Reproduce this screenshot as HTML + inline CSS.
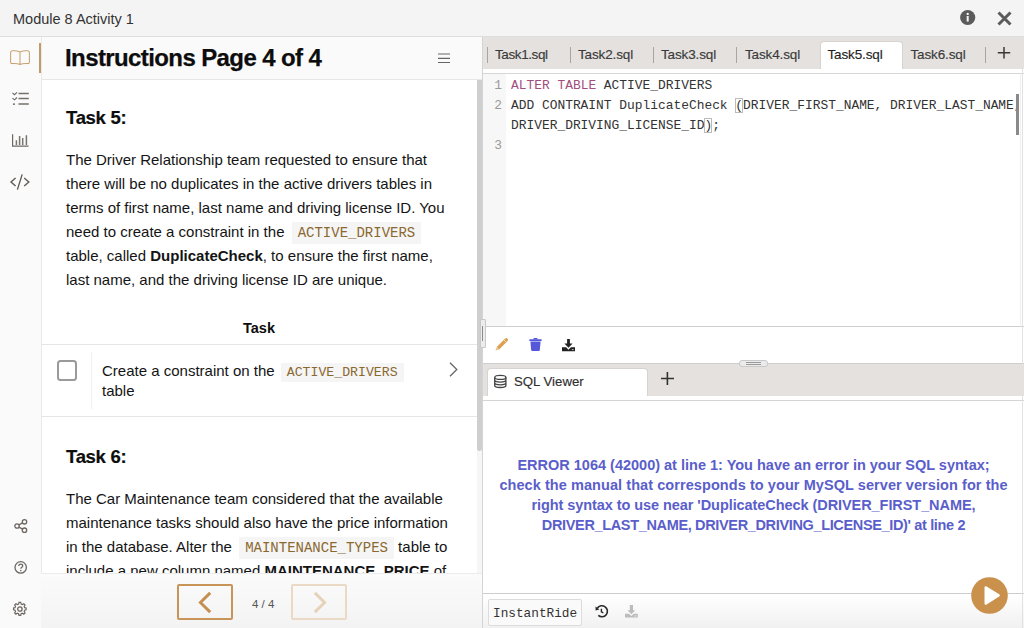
<!DOCTYPE html>
<html><head><meta charset="utf-8">
<style>
*{box-sizing:border-box;margin:0;padding:0}
html,body{width:1024px;height:628px;overflow:hidden;background:#fff;font-family:"Liberation Sans",sans-serif;color:#111}
.a{position:absolute}
.nw{white-space:nowrap}
svg{position:absolute;overflow:visible}
#title{left:0;top:0;width:1024px;height:37px;background:#f4f4f4;border-bottom:1px solid #dedede}
#side{left:0;top:37px;width:42px;height:591px;background:#fafafa;border-right:1px solid #e9e9e9}
#ind{left:39px;top:43px;width:2px;height:30px;background:#c39a6b}
#hdr{left:42px;top:37px;width:441px;height:43px;background:#fafafa;border-bottom:1px solid #e6e6e6}
#lscroll{left:477px;top:80px;width:5px;height:370.5px;background:#cfcfcf;border-radius:0 0 2.5px 2.5px}
#ltrack{left:477px;top:450px;width:5px;height:123px;background:#f6f6f6}
#nav{left:41px;top:573px;width:441px;height:55px;background:linear-gradient(#fbfbfb,#f3f3f3);border-top:1px solid #ececec}
#right{left:482px;top:37px;width:542px;height:591px;background:#fff;border-left:1px solid #d4d4d4}
#tabs{left:483px;top:37px;width:541px;height:32px;background:#e4e1de}
.tab{position:absolute;top:7.6px;height:20px;line-height:20px;font-size:13.5px;letter-spacing:-0.55px;color:#3a3a3a;white-space:nowrap;-webkit-text-stroke:0.15px #3a3a3a}
.sep{position:absolute;top:10px;width:1px;height:16px;background:#a8a5a2}
.p{position:absolute;left:66px;font-size:15px;line-height:24px;color:#141414;white-space:nowrap}
.code{font-family:"Liberation Mono",monospace;color:#8a682f;background:#f5f5f5;font-size:14px;padding:3px 6px;margin-left:3px;line-height:0}
.mono{font-family:"Liberation Mono",monospace}
.kw{color:#a24d7c}
.icon{stroke:#6e6762;fill:none;stroke-width:1.3}
</style></head><body>
<div id="title" class="a"><div class="a nw" style="left:13px;top:9px;font-size:14.5px;line-height:20px;color:#333">Module 8 Activity 1</div>
 <svg style="left:960px;top:10px" width="16" height="16" viewBox="0 0 16 16"><circle cx="7.7" cy="7.5" r="7.6" fill="#5b5b5b"/><circle cx="7.7" cy="3.9" r="1.2" fill="#f4f4f4"/><rect x="6.7" y="6" width="2" height="5.6" fill="#f4f4f4"/></svg>
 <svg style="left:997px;top:11px" width="15" height="15" viewBox="0 0 15 15"><path d="M1.5 1.5L13.5 13.5M13.5 1.5L1.5 13.5" stroke="#5b5b5b" stroke-width="3"/></svg>
</div>

<div id="side" class="a"></div>
<div id="ind" class="a"></div>
<!-- sidebar icons -->
<svg style="left:10px;top:49.5px" width="20" height="15" viewBox="0 0 20 15"><path d="M10 2C8 1 5 0.6 2.3 0.8Q0.6 1 0.6 2.6V12.2Q0.6 13.6 2.2 13.6C5 13.4 8 13.6 10 14.5C12 13.6 15 13.4 17.8 13.6Q19.4 13.6 19.4 12.2V2.6Q19.4 1 17.7 0.8C15 0.6 12 1 10 2ZM10 2V14.5" fill="none" stroke="#c9a273" stroke-width="1.05" stroke-linejoin="round"/></svg>
<svg style="left:12px;top:92px" width="18" height="14" viewBox="0 0 18 14"><path d="M0.4 0.9L2.5 2.7L5 0.3M0.4 6.1L2.5 7.9L5 5.5" fill="none" stroke="#6e6762" stroke-width="1.05"/><rect x="1.1" y="11.3" width="1.7" height="1.7" fill="#6e6762"/><path d="M6.5 1.4H16.8M6.5 6.6H16.8M6.5 12.1H16.8" fill="none" stroke="#76706b" stroke-width="1.5"/></svg>
<svg style="left:12px;top:134px" width="17" height="13" viewBox="0 0 17 13"><path d="M0.6 0.3V12.2H16.5" fill="none" stroke="#6e6762" stroke-width="1.2"/><path d="M4.4 6.2V11M7.6 2V11M10.7 4V11M14.4 1.3V11" fill="none" stroke="#7a746f" stroke-width="1.5"/></svg>
<svg style="left:10px;top:174px" width="20" height="16" viewBox="0 0 20 16"><path d="M5.6 4.1L1 8L5.6 11.9M14.2 4.1L18.8 8L14.2 11.9M12.2 0.4L7.4 15.6" fill="none" stroke="#5f5853" stroke-width="1.35"/></svg>
<svg style="left:13.5px;top:518.5px" width="14" height="14" viewBox="0 0 14 14"><circle cx="3" cy="7" r="2.2" class="icon" stroke-width="1.2"/><circle cx="10.5" cy="2.8" r="2.2" class="icon" stroke-width="1.2"/><circle cx="10.5" cy="11.2" r="2.2" class="icon" stroke-width="1.2"/><path d="M4.9 5.9L8.6 3.9M4.9 8.1L8.6 10.1" class="icon" stroke-width="1.2"/></svg>
<svg style="left:13.5px;top:561px" width="14" height="13" viewBox="0 0 14 13"><circle cx="6.7" cy="6.4" r="5.7" class="icon" stroke-width="1.3"/><path d="M4.8 5C4.8 3.8 5.7 3.1 6.7 3.1C7.8 3.1 8.7 3.8 8.7 4.9C8.7 6.3 6.8 6.3 6.8 7.8" class="icon" stroke-width="1.3"/><circle cx="6.8" cy="9.6" r="0.8" fill="#6e6762"/></svg>
<svg style="left:13px;top:602px" width="14" height="14" viewBox="0 0 14 14"><path d="M6 0.7H8L8.4 2.5L9.8 3.1L11.4 2.1L12.8 3.5L11.8 5.1L12.4 6.5L14 6.9V8.9L12.4 9.3L11.8 10.7L12.8 12.3L11.4 13.7L9.8 12.7L8.4 13.3L8 15H6L5.6 13.3L4.2 12.7L2.6 13.7L1.2 12.3L2.2 10.7L1.6 9.3L0 8.9V6.9L1.6 6.5L2.2 5.1L1.2 3.5L2.6 2.1L4.2 3.1L5.6 2.5Z" transform="scale(0.9) translate(0.6,-0.2)" class="icon" stroke-width="1.3"/><circle cx="6.9" cy="7" r="2.2" class="icon" stroke-width="1.3"/></svg>

<div id="hdr" class="a"><div class="a nw" style="left:23px;top:5.6px;font-size:24px;letter-spacing:-0.6px;line-height:30px;font-weight:bold;color:#0d0d0d;-webkit-text-stroke:0.25px #0d0d0d">Instructions Page 4 of 4</div>
 <svg style="left:396px;top:15px" width="12" height="12" viewBox="0 0 12 12"><path d="M0 2H12M0 6.4H12M0 10.5H12" stroke="#666" stroke-width="1.1"/></svg>
</div>

<!-- content -->
<div class="a" style="left:41px;top:80px;width:436px;height:493px;overflow:hidden">
 <div class="a" style="left:0;top:0;width:436px;height:600px">
 </div>
</div>
<div class="a nw" style="left:66px;top:106px;font-size:18.5px;letter-spacing:-0.3px;line-height:24px;font-weight:bold;color:#0d0d0d;-webkit-text-stroke:0.2px #0d0d0d">Task 5:</div>
<div class="p" style="top:148.2px">The Driver Relationship team requested to ensure that<br>there will be no duplicates in the active drivers tables in<br>terms of first name, last name and driving license ID. You<br>need to create a constraint in the <span class="code">ACTIVE_DRIVERS</span><br>table, called <b>DuplicateCheck</b>, to ensure the first name,<br>last name, and the driving license ID are unique.</div>
<div class="a nw" style="left:243px;top:318.2px;font-size:14.5px;line-height:20px;font-weight:bold;color:#0d0d0d">Task</div>
<div class="a" style="left:41px;top:344px;width:436px;height:1px;background:#e6e6e6"></div>
<div class="a" style="left:41px;top:416px;width:436px;height:1px;background:#e6e6e6"></div>
<div class="a" style="left:56.5px;top:360px;width:20px;height:20.5px;border:2px solid #9a9a9a;border-radius:3.5px"></div>
<div class="a" style="left:91px;top:352px;width:1px;height:57px;background:#f0f0f0"></div>
<div class="a nw" style="left:102px;top:361px;font-size:15px;line-height:20px;color:#141414">Create a constraint on the <span class="code" style="font-size:13.2px;padding:2px 6px;margin-left:2px">ACTIVE_DRIVERS</span><br>table</div>
<svg style="left:449px;top:362px" width="9" height="15" viewBox="0 0 9 15"><path d="M1 0.8L7.8 7.5L1 14.2" fill="none" stroke="#666" stroke-width="1.3"/></svg>
<div class="a nw" style="left:66px;top:445px;font-size:18.5px;letter-spacing:-0.3px;line-height:24px;font-weight:bold;color:#0d0d0d;-webkit-text-stroke:0.2px #0d0d0d">Task 6:</div>
<div class="a" style="left:41px;top:480px;width:436px;height:93px;overflow:hidden">
<div class="p" style="left:25px;top:7.2px">The Car Maintenance team considered that the available<br>maintenance tasks should also have the price information<br>in the database. Alter the <span class="code">MAINTENANCE_TYPES</span> table to<br>include a new column named <b>MAINTENANCE_PRICE</b> of</div>
</div>
<div id="ltrack" class="a"></div><div id="lscroll" class="a"></div>
<div class="a" style="z-index:5;left:480px;top:319px;width:5.5px;height:28.5px;background:#ececec;border:1px solid #c8c8c8;border-radius:1px"></div>
<div class="a" style="z-index:6;left:482.3px;top:326px;width:1px;height:15px;background:#8d8d8d"></div>

<div id="nav" class="a">
 <div class="a" style="left:136.3px;top:10px;width:55.5px;height:36px;border:2px solid #c89458;border-radius:2px"></div>
 <svg style="left:156.5px;top:18.2px" width="14" height="21" viewBox="0 0 14 21"><path d="M12.2 0.9L2.4 10.5L12.2 20.1" fill="none" stroke="#c48f50" stroke-width="2.9"/></svg>
 <div class="a nw" style="left:211px;top:21.7px;font-size:11.5px;line-height:16px;color:#555">4 / 4</div>
 <div class="a" style="left:250px;top:10px;width:55.5px;height:36px;border:2px solid #ead9c4;border-radius:2px"></div>
 <svg style="left:271.5px;top:18.2px" width="14" height="21" viewBox="0 0 14 21"><path d="M1.8 0.9L11.6 10.5L1.8 20.1" fill="none" stroke="#e6d2b8" stroke-width="2.9"/></svg>
</div>

<!-- right panel -->
<div id="right" class="a"></div>
<div id="tabs" class="a">
 <div class="sep" style="left:3.5px"></div>
 <div class="tab" style="left:12px;letter-spacing:-0.4px">Task1.sql</div>
 <div class="sep" style="left:86.5px"></div>
 <div class="tab" style="left:95px;letter-spacing:-0.13px">Task2.sql</div>
 <div class="sep" style="left:169.5px"></div>
 <div class="tab" style="left:178px;letter-spacing:-0.13px">Task3.sql</div>
 <div class="sep" style="left:253px"></div>
 <div class="tab" style="left:262px;letter-spacing:-0.13px">Task4.sql</div>
 <div class="a" style="left:336.5px;top:4px;width:83px;height:28px;background:#fff;border:1px solid #d6d3d0;border-bottom:none;border-radius:4px 4px 0 0"></div>
 <div class="tab" style="left:344.5px;color:#1e1e1e;letter-spacing:-0.13px;-webkit-text-stroke:0.15px #1e1e1e">Task5.sql</div>
 <div class="tab" style="left:427.5px;letter-spacing:-0.13px">Task6.sql</div>
 <div class="sep" style="left:502px"></div>
 <svg style="left:514px;top:10px" width="14" height="12" viewBox="0 0 14 12"><path d="M7 0V11.5M0.8 5.7H13.2" stroke="#3a3a3a" stroke-width="1.5"/></svg>
</div>
<div class="a" style="left:483px;top:73px;width:541px;height:1px;background:#d6d6d6"></div>
<div class="a" style="left:483px;top:74px;width:22.5px;height:252px;background:#f7f7f7"></div>
<div class="a mono" style="left:483px;top:75.5px;width:19px;font-size:12.9px;line-height:20px;color:#9a9a9a;text-align:right">1<br>2<br><br>3</div>
<div class="a mono nw" style="left:511px;top:75.5px;width:511px;overflow:hidden;font-size:12.9px;line-height:20px;color:#333">
<span class="kw">ALTER</span> <span class="kw">TABLE</span> ACTIVE_DRIVERS<br>ADD CONTRAINT DuplicateCheck <span style="outline:1px solid #bbb;outline-offset:-1px">(</span>DRIVER_FIRST_NAME, DRIVER_LAST_NAME,<br>DRIVER_DRIVING_LICENSE_ID<span style="outline:1px solid #bbb;outline-offset:-1px">)</span>;</div>
<div class="a" style="left:1016px;top:94px;width:3px;height:41px;background:#8a8a8a"></div>
<div class="a" style="left:1020px;top:74px;width:1px;height:252px;background:#f0f0f0"></div>
<div class="a" style="left:483px;top:326px;width:541px;height:1px;background:#cfcfcf"></div>

<!-- toolbar icons -->
<svg style="left:495px;top:338px" width="14" height="13" viewBox="0 0 14 13"><path d="M1.7 9.1L10.2 0.6Q11.3 -0.4 12.4 0.6L12.6 0.8Q13.6 1.9 12.6 3L4.1 11.4Z" fill="#dba052"/><path d="M1.7 9.1L4.1 11.4L0.4 12.7Z" fill="#e9c48f"/><path d="M8.9 1.9L11.3 4.3" stroke="#fbe9cf" stroke-width="0.8"/></svg>
<svg style="left:529px;top:338px" width="13" height="13" viewBox="0 0 13 13"><rect x="0.3" y="1.2" width="12.4" height="1.8" rx="0.6" fill="#5558d9"/><rect x="4.5" y="0" width="4" height="1.5" rx="0.5" fill="#5558d9"/><path d="M1.4 3.5H11.6L10.8 12.2C10.7 12.7 10.4 13 9.9 13H3.1C2.6 13 2.3 12.7 2.2 12.2Z" fill="#5558d9"/></svg>
<svg style="left:562px;top:338.5px" width="13" height="13" viewBox="0 0 13 13"><path d="M5.1 0H7.9V4.6H10.6L6.5 8.7L2.4 4.6H5.1Z" fill="#222"/><path d="M0 8.3H4.1L6.5 10.7L8.9 8.3H13V12.3H0Z" fill="#222"/><rect x="9.8" y="10.2" width="1.8" height="0.9" fill="#ddd"/></svg>

<!-- sql viewer bar -->
<div class="a" style="left:483px;top:363px;width:541px;height:1px;background:#cdcdcd"></div>
<div class="a" style="left:483px;top:364px;width:541px;height:32px;background:#e4e1de"></div>
<div class="a" style="left:487px;top:367.5px;width:160.5px;height:28.5px;background:#fff;border:1px solid #d6d3d0;border-bottom:none;border-radius:4px 4px 0 0"></div>
<div class="a" style="left:483px;top:400px;width:541px;height:1px;background:#d4d4d4"></div>
<div class="a" style="left:739px;top:360px;width:29px;height:6.5px;background:#ebebeb;border:1px solid #c9c9c9;border-radius:3px"></div>
<div class="a" style="left:746px;top:362px;width:15px;height:0.8px;background:#999"></div>
<div class="a" style="left:746px;top:364px;width:15px;height:0.8px;background:#999"></div>
<svg style="left:494px;top:375px" width="13" height="13" viewBox="0 0 13 13"><ellipse cx="6.3" cy="2.4" rx="5.6" ry="2" fill="none" stroke="#444" stroke-width="1.3"/><path d="M0.7 2.4V10.5C0.7 11.6 3.2 12.5 6.3 12.5C9.4 12.5 11.9 11.6 11.9 10.5V2.4M0.7 5.1C0.7 6.2 3.2 7.1 6.3 7.1C9.4 7.1 11.9 6.2 11.9 5.1M0.7 7.8C0.7 8.9 3.2 9.8 6.3 9.8C9.4 9.8 11.9 8.9 11.9 7.8" fill="none" stroke="#444" stroke-width="1.3"/></svg>
<div class="a nw" style="left:514px;top:372.2px;font-size:13.2px;line-height:20px;color:#2e2e2e;-webkit-text-stroke:0.15px #2e2e2e">SQL Viewer</div>
<svg style="left:660.5px;top:372px" width="13" height="13" viewBox="0 0 13 13"><path d="M6.4 0V13M0 6.5H13" stroke="#333" stroke-width="1.6"/></svg>

<!-- error -->
<div class="a" style="left:483px;top:455px;width:541px;text-align:center;font-size:14.5px;line-height:20px;font-weight:bold;color:#5a5ecb;white-space:nowrap">ERROR 1064 (42000) at line 1: You have an error in your SQL syntax;<br><span style="letter-spacing:0.07px">check the manual that corresponds to your MySQL server version for the</span><br><span style="letter-spacing:-0.07px">right syntax to use near 'DuplicateCheck (DRIVER_FIRST_NAME,</span><br><span style="letter-spacing:-0.35px">DRIVER_LAST_NAME, DRIVER_DRIVING_LICENSE_ID)' at line 2</span></div>

<!-- bottom bar -->
<div class="a" style="left:483px;top:593px;width:541px;height:35px;background:linear-gradient(#ffffff,#f1f1f1);border-top:1px solid #cdcdcd"></div>
<div class="a" style="left:487.5px;top:598.5px;width:94px;height:27px;background:#fafafa;border:1px solid #dcdcdc;border-radius:2px"></div>
<div class="a mono nw" style="left:493px;top:603.7px;font-size:12.75px;line-height:20px;color:#333">InstantRide</div>
<svg style="left:595px;top:605px" width="14" height="13" viewBox="0 0 14 13"><path d="M2.3 3.2A5.5 5.5 0 1 1 3.3 10.4" fill="none" stroke="#2a2a2a" stroke-width="1.6"/><path d="M0.5 1.6L0.6 5.6L4.4 4.4Z" fill="#2a2a2a"/><path d="M6.4 3.8V6.8L8.3 7.9" fill="none" stroke="#2a2a2a" stroke-width="1.4"/></svg>
<svg style="left:625px;top:605px" width="13" height="13" viewBox="0 0 13 13"><path d="M4.8 0H8V5.2H10.3L6.4 9.3L2.5 5.2H4.8Z" fill="#bcbcbc"/><path d="M0 8.8H3.8L6.4 11L9 8.8H12.8V12.6H0Z" fill="#bcbcbc"/><rect x="9.6" y="10.5" width="1.8" height="0.9" fill="#eee"/></svg>
<svg style="left:971px;top:577px" width="37" height="37" viewBox="0 0 37 37"><circle cx="18.5" cy="18.5" r="18.3" fill="#c9914c"/><path d="M13.5 10.5C13.5 9.3 14.6 8.8 15.6 9.4L28.2 17.2C29.1 17.8 29.1 19 28.2 19.6L15.6 27.5C14.6 28.1 13.5 27.6 13.5 26.4Z" fill="#fff"/></svg>
<div class="a" style="left:1022px;top:37px;width:1px;height:591px;background:#e2e2e2"></div>
</body></html>
